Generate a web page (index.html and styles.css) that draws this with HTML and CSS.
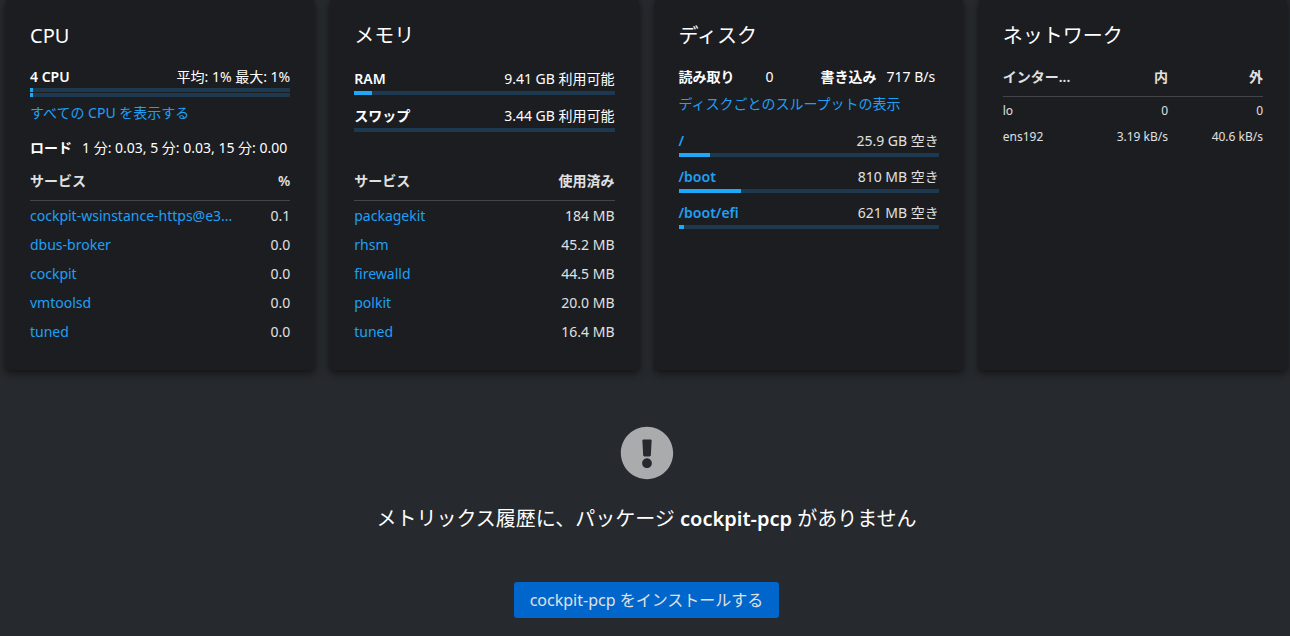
FILE: index.html
```html
<!DOCTYPE html>
<html lang="ja">
<head>
    <meta charset="UTF-8">
    <meta name="viewport" content="width=device-width, initial-scale=1.0">
    <title>メトリックスと履歴</title>
    <link rel="stylesheet" href="styles.css">
</head>
<body>

<main class="page">
    <section class="metrics">

        <article class="card">
            <h2>CPU</h2>
            <div class="cpu-usage">
                <div class="row"><strong>4 CPU</strong><span>平均: 1% 最大: 1%</span></div>
                <div class="cores">
                    <div class="bar"><div class="bar-value" style="width: 1%"></div></div>
                    <div class="bar"><div class="bar-value" style="width: 1%"></div></div>
                </div>
            </div>
            <a class="details" href="#">すべての CPU を表示する</a>
            <p class="load"><strong>ロード</strong><span>1 分: 0.03, 5 分: 0.03, 15 分: 0.00</span></p>
            <table class="services">
                <thead>
                    <tr><th>サービス</th><th>%</th></tr>
                </thead>
                <tbody>
                    <tr><td><a href="#">cockpit-wsinstance-https@e3...</a></td><td>0.1</td></tr>
                    <tr><td><a href="#">dbus-broker</a></td><td>0.0</td></tr>
                    <tr><td><a href="#">cockpit</a></td><td>0.0</td></tr>
                    <tr><td><a href="#">vmtoolsd</a></td><td>0.0</td></tr>
                    <tr><td><a href="#">tuned</a></td><td>0.0</td></tr>
                </tbody>
            </table>
        </article>

        <article class="card">
            <h2>メモリ</h2>
            <div class="memory-usage">
                <div>
                    <div class="row"><strong>RAM</strong><span>9.41 GB 利用可能</span></div>
                    <div class="bar"><div class="bar-value" style="width: 7%"></div></div>
                </div>
                <div>
                    <div class="row"><strong>スワップ</strong><span>3.44 GB 利用可能</span></div>
                    <div class="bar"><div class="bar-value" style="width: 0%"></div></div>
                </div>
            </div>
            <table class="services">
                <thead>
                    <tr><th>サービス</th><th>使用済み</th></tr>
                </thead>
                <tbody>
                    <tr><td><a href="#">packagekit</a></td><td>184 MB</td></tr>
                    <tr><td><a href="#">rhsm</a></td><td>45.2 MB</td></tr>
                    <tr><td><a href="#">firewalld</a></td><td>44.5 MB</td></tr>
                    <tr><td><a href="#">polkit</a></td><td>20.0 MB</td></tr>
                    <tr><td><a href="#">tuned</a></td><td>16.4 MB</td></tr>
                </tbody>
            </table>
        </article>

        <article class="card">
            <h2>ディスク</h2>
            <div class="disk-io">
                <strong>読み取り</strong><span>0</span>
                <strong>書き込み</strong><span>717 B/s</span>
            </div>
            <a class="details" href="#">ディスクごとのスループットの表示</a>
            <div class="mounts">
                <div>
                    <div class="row"><a href="#">/</a><span>25.9 GB 空き</span></div>
                    <div class="bar"><div class="bar-value" style="width: 12%"></div></div>
                </div>
                <div>
                    <div class="row"><a href="#">/boot</a><span>810 MB 空き</span></div>
                    <div class="bar"><div class="bar-value" style="width: 24%"></div></div>
                </div>
                <div>
                    <div class="row"><a href="#">/boot/efi</a><span>621 MB 空き</span></div>
                    <div class="bar"><div class="bar-value" style="width: 2%"></div></div>
                </div>
            </div>
        </article>

        <article class="card">
            <h2>ネットワーク</h2>
            <table class="network">
                <thead>
                    <tr><th>インター...</th><th>内</th><th>外</th></tr>
                </thead>
                <tbody>
                    <tr><td>lo</td><td>0</td><td>0</td></tr>
                    <tr><td>ens192</td><td>3.19 kB/s</td><td>40.6 kB/s</td></tr>
                </tbody>
            </table>
        </article>

    </section>

    <section class="empty-state">
        <svg class="empty-icon" viewBox="0 0 512 512" aria-hidden="true">
            <path fill="currentColor" d="M504 256c0 137-111 248-248 248S8 393 8 256 119 8 256 8s248 111 248 248zm-248 50c-25.400 0-46 20.600-46 46s20.600 46 46 46 46-20.600 46-46-20.600-46-46-46zm-43.700-165.300l7.400 136c.4 6.400 5.600 11.300 12 11.300h48.600c6.400 0 11.600-4.900 12-11.300l7.400-136c.4-6.900-5.100-12.700-12-12.700h-63.400c-6.900 0-12.400 5.800-12 12.700z"/>
        </svg>
        <h1>メトリックス履歴に、パッケージ <strong>cockpit-pcp</strong> がありません</h1>
        <button type="button">cockpit-pcp をインストールする</button>
    </section>
</main>

</body>
</html>
```
FILE: styles.css
```css
/* Global Styles */
* {
    margin: 0;
    padding: 0;
    box-sizing: border-box;
}

body {
    font-family: 'Noto Sans', 'Noto Sans CJK JP', sans-serif;
    font-size: 14px;
    line-height: 21px;
    color: #e0e0e0;
    background-color: #26292d;
}

a {
    color: #1fa0f5;
    text-decoration: none;
}

strong {
    font-weight: 600;
}

.page {
    padding: 0 3px 18px 6px;
}

/* Metric cards */
.metrics {
    display: grid;
    grid-template-columns: repeat(4, minmax(0, 1fr));
    gap: 16px;
}

.card {
    display: flex;
    flex-direction: column;
    padding: 21px 24px 24px;
    background-color: #1b1d21;
    border-radius: 3px;
    box-shadow: 0 4px 8px rgba(3, 3, 3, 0.4), 0 0 4px rgba(3, 3, 3, 0.3);
    white-space: nowrap;
}

.card h2 {
    margin-bottom: 15px;
    font-size: 20px;
    font-weight: 400;
    line-height: 30px;
    color: #fff;
}

.row {
    display: flex;
    justify-content: space-between;
}

.cpu-usage,
.memory-usage,
.load {
    color: #fff;
}

.bar {
    height: 4px;
    background-color: #1c394f;
}

.bar-value {
    height: 100%;
    background-color: #1fa7f8;
}

.cores {
    display: grid;
    gap: 1px;
    margin: 1px 0 5px;
}

.load {
    display: flex;
    gap: 10px;
    margin: 14px 0 12px;
}

.memory-usage {
    display: grid;
    gap: 10px;
    padding-top: 2px;
}

.memory-usage .bar {
    margin-top: 2px;
}

.disk-io {
    display: grid;
    grid-template-columns: 87px 55px 66px auto;
    margin-bottom: 6px;
    color: #fff;
}

.mounts {
    display: grid;
    gap: 9px;
    margin-top: 16px;
}

.mounts .bar {
    margin-top: 2px;
}

.mounts a {
    font-weight: 600;
}

/* Tables */
table {
    width: 100%;
    border-collapse: separate;
    border-spacing: 0;
}

th {
    height: 31px;
    padding-bottom: 9px;
    border-bottom: 1px solid #444548;
    font-weight: 600;
    text-align: right;
}

td {
    text-align: right;
}

th:first-child,
td:first-child {
    text-align: left;
}

.services {
    margin-top: auto;
}

.services td {
    height: 29px;
}

.network {
    table-layout: fixed;
}

.network th:first-child {
    width: 27%;
}

.network td {
    height: 26px;
    font-size: 12px;
}

/* Empty state */
.empty-state {
    display: flex;
    flex-direction: column;
    align-items: center;
    padding-top: 56px;
    text-align: center;
}

.empty-icon {
    width: 54px;
    height: 54px;
    margin-bottom: 24px;
    color: #aaabac;
}

h1 {
    margin-bottom: 48px;
    font-size: 20px;
    font-weight: 400;
    line-height: 30px;
    color: #fff;
}

button {
    padding: 6px 16px;
    border: none;
    border-radius: 3px;
    background-color: #06c;
    color: #e0e0e0;
    font-family: inherit;
    font-size: 16px;
    line-height: 24px;
    cursor: pointer;
}

button:hover {
    background-color: #004080;
}
```
